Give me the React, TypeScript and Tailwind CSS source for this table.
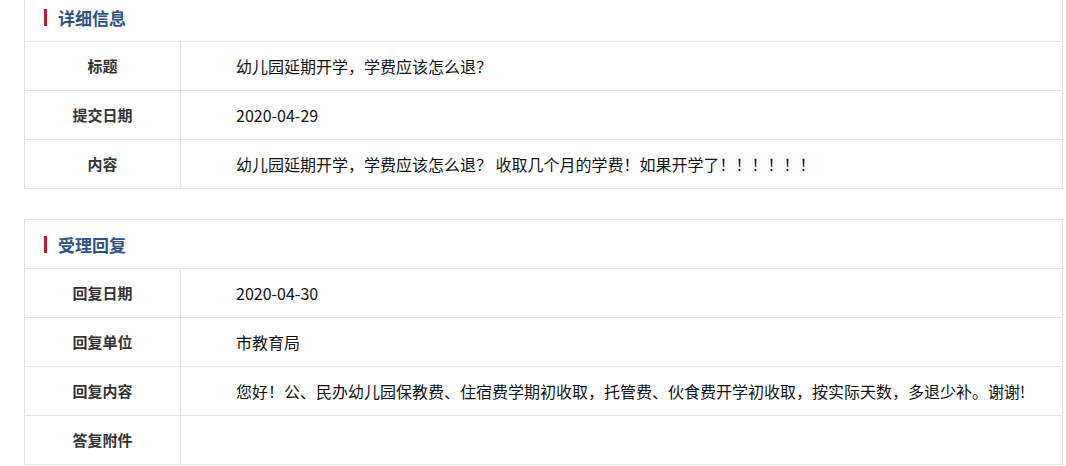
import React from 'react';

type Row = { label: string; value?: React.ReactNode };

const detailRows: Row[] = [
    { label: '标题', value: '幼儿园延期开学，学费应该怎么退？' },
    { label: '提交日期', value: '2020-04-29' },
    { label: '内容', value: '幼儿园延期开学，学费应该怎么退？ 收取几个月的学费！如果开学了！！！！！！' },
];

const replyRows: Row[] = [
    { label: '回复日期', value: '2020-04-30' },
    { label: '回复单位', value: '市教育局' },
    { label: '回复内容', value: '您好！公、民办幼儿园保教费、住宿费学期初收取，托管费、伙食费开学初收取，按实际天数，多退少补。谢谢!' },
    { label: '答复附件' },
];

const Panel: React.FC<{ title: string; rows: Row[]; className?: string }> = ({ title, rows, className }) => {
    return (
        <section className={`ml-[24px] w-[1039px] border border-[#e3e3e3] bg-white ${className ?? ''}`}>
            <div className="flex items-center h-[49px] pl-[19px] border-b border-[#e3e3e3]">
                <span className="w-[3px] h-[17px] bg-[#c5152c]"></span>
                <h2 className="ml-[11px] text-[17px] font-bold text-[#2e5288] leading-none">{title}</h2>
            </div>
            {rows.map((row, i) => (
                <div key={row.label} className={`flex h-[48px] ${i < rows.length - 1 ? 'border-b border-[#e3e3e3] h-[49px]' : ''}`}>
                    <div className="w-[156px] shrink-0 flex items-center justify-center border-r border-[#e3e3e3] text-[15px] font-bold text-[#333]">
                        {row.label}
                    </div>
                    <div className="flex-1 flex items-center pl-[55px] text-[16px] text-[#111] whitespace-nowrap">
                        {row.value}
                    </div>
                </div>
            ))}
        </section>
    );
};

export default function App() {
    return (
        <div className="w-[1066px] h-[466px] overflow-hidden bg-white" style={{ fontFamily: '"Noto Sans CJK SC", "Noto Sans", sans-serif' }}>
            <Panel title="详细信息" rows={detailRows} className="-mt-[8px]" />
            <Panel title="受理回复" rows={replyRows} className="mt-[30px]" />
        </div>
    );
}
